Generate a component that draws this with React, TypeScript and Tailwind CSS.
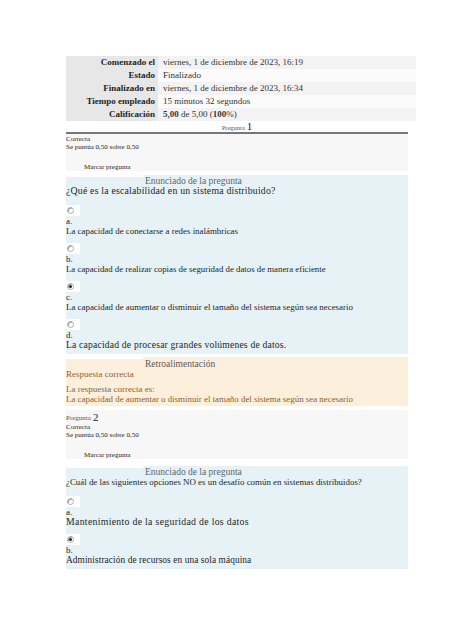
type Option = { letter: string; text: string; look: string; checked?: boolean }

const Radio = ({ checked = false }: { checked?: boolean }) => (
  <div className="flex h-[12px] items-center">
    <div className="ml-[-1px] flex h-[11px] w-[15px] items-center bg-white pl-[2px]">
      <svg width="7" height="7" viewBox="0 0 14 14">
        <circle cx="7" cy="7" r="6" fill="#fff" stroke="#9a9a9a" strokeWidth="1.6" />
        <path d="M2.5 9.5 A6 6 0 0 1 9.5 2.5" fill="none" stroke="#6f6f6f" strokeWidth="1.6" />
        {checked && <circle cx="7" cy="7" r="3" fill="#222" />}
      </svg>
    </div>
  </div>
)

const OptionBlock = ({ option, first }: { option: Option; first?: boolean }) => (
  <div className={first ? 'mt-[8px]' : 'mt-[6px]'}>
    <Radio checked={option.checked} />
    <div className="h-[10px] text-[9px] leading-[10px]">{option.letter}.</div>
    <div className={`h-[10px] whitespace-nowrap leading-[10px] ${option.look}`}>{option.text}</div>
  </div>
)

const InfoBox = ({ num, withTitle }: { num: number; withTitle?: boolean }) => (
  <div className="bg-[#f7f7f8] pt-[1px] text-[7px] leading-[8px] text-[#222]">
    {withTitle && (
      <div className="flex h-[12px] items-end">
        <span className="text-[7px] leading-[9px] text-[#555]">Pregunta</span>
        <span className="ml-[2px] text-[11px] leading-[12px]">{num}</span>
      </div>
    )}
    <div>Correcta</div>
    <div>Se puntúa 0,50 sobre 0,50</div>
    <div className="mt-[12px] pl-[18px]">Marcar pregunta</div>
  </div>
)

const QuestionBox = ({
  question,
  questionLook,
  options,
}: {
  question: string
  questionLook: string
  options: Option[]
}) => (
  <div>
    <div className="ml-[77px] h-[2px] bg-[#e6f2f5]" />
    <div className="bg-[#e6f2f5] pb-[4px]">
      <div className="h-[9px] pl-[79px] text-[9.5px] leading-[9px] text-[#5b6870]">
        Enunciado de la pregunta
      </div>
      <div className={`h-[10px] whitespace-nowrap leading-[10px] ${questionLook}`}>{question}</div>
      {options.map((o, i) => (
        <OptionBlock key={o.letter} option={o} first={i === 0} />
      ))}
    </div>
  </div>
)

const summary = [
  ['Comenzado el', 'viernes, 1 de diciembre de 2023, 16:19'],
  ['Estado', 'Finalizado'],
  ['Finalizado en', 'viernes, 1 de diciembre de 2023, 16:34'],
  ['Tiempo empleado', '15 minutos 32 segundos'],
]

export default function App() {
  return (
    <div className="min-h-[632px] w-[474px] bg-white pt-[56px] [font-family:'Liberation_Serif','Times_New_Roman',serif] text-[#1f1f1f]">
      <div className="ml-[66px] w-[342px]">
        <div className="w-[350px] text-[9px] leading-[13px]">
          {summary.map(([k, v], i) => (
            <div key={k} className="flex h-[13px]">
              <div className="w-[92px] bg-[#e7e7e7] pr-[3px] text-right font-bold">{k}</div>
              <div
                className={`flex-1 pl-[5px] text-[#333] ${i % 2 === 0 ? 'bg-[#f3f3f3]' : 'bg-[#fbfbfb]'}`}
              >
                {v}
              </div>
            </div>
          ))}
          <div className="flex h-[13px]">
            <div className="w-[92px] bg-[#e7e7e7] pr-[3px] text-right font-bold">Calificación</div>
            <div className="flex-1 bg-[#f3f3f3] pl-[5px] text-[#333]">
              <b>5,00</b> de 5,00 (<b>100</b>%)
            </div>
          </div>
        </div>

        <div className="mt-[1px] flex h-[10px] items-end justify-center">
          <span className="text-[6.5px] leading-[8px] text-[#555]">Pregunta</span>
          <span className="ml-[2px] text-[11px] leading-[11px]">1</span>
        </div>
        <div className="h-[2px] bg-[#777]" />
        <InfoBox num={1} />

        <div className="mt-[4px]">
          <QuestionBox
            question="¿Qué es la escalabilidad en un sistema distribuido?"
            questionLook="text-[9.8px] tracking-[0.2px]"
            options={[
              { letter: 'a', look: 'text-[8.9px]', text: 'La capacidad de conectarse a redes inalámbricas' },
              {
                letter: 'b',
                look: 'text-[8.8px]',
                text: 'La capacidad de realizar copias de seguridad de datos de manera eficiente',
              },
              {
                letter: 'c',
                look: 'text-[8.9px]',
                text: 'La capacidad de aumentar o disminuir el tamaño del sistema según sea necesario',
                checked: true,
              },
              {
                letter: 'd',
                look: 'text-[9.6px] tracking-[0.2px]',
                text: 'La capacidad de procesar grandes volúmenes de datos.',
              },
            ]}
          />
        </div>

        <div className="mt-[3px]">
          <div className="ml-[77px] h-[2px] bg-[#fcefdc]" />
          <div className="bg-[#fcefdc] pb-[2px] text-[9px] leading-[10px] text-[#8c6330]">
            <div className="pl-[79px] text-[9.5px] text-[#5b5b5b]">Retroalimentación</div>
            <div>Respuesta correcta</div>
            <div className="mt-[5px]">La respuesta correcta es:</div>
            <div className="text-[8.9px]">
              La capacidad de aumentar o disminuir el tamaño del sistema según sea necesario
            </div>
          </div>
        </div>

        <div className="mt-[4px]">
          <InfoBox num={2} withTitle />
        </div>

        <div className="mt-[7px]">
          <QuestionBox
            question="¿Cuál de las siguientes opciones NO es un desafío común en sistemas distribuidos?"
            questionLook="text-[8.9px]"
            options={[
              {
                letter: 'a',
                look: 'text-[9.8px] tracking-[0.3px]',
                text: 'Mantenimiento de la seguridad de los datos',
              },
              {
                letter: 'b',
                look: 'text-[9.3px] tracking-[0.1px]',
                text: 'Administración de recursos en una sola máquina',
                checked: true,
              },
            ]}
          />
        </div>
      </div>
    </div>
  )
}
